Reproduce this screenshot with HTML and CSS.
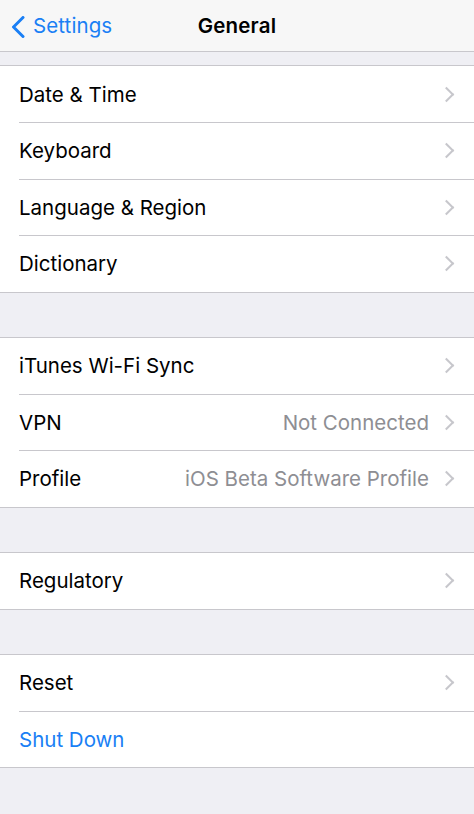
FILE: index.html
```html
<!DOCTYPE html>
<html>
<head>
    <title>General</title>
    <link rel="stylesheet" href="styles.css">
</head>
<body>

<header class="navbar">
    <a class="back">
        <svg class="back-icon" viewBox="0 0 14 22" width="14" height="22">
            <path d="M12 1.5 L2.5 11 L12 20.5" fill="none" stroke="#1a7ff5" stroke-width="3" stroke-linecap="round" stroke-linejoin="round"/>
        </svg>
        <span>Settings</span>
    </a>
    <h1 class="title">General</h1>
</header>

<div class="gap gap-top"></div>

<ul class="group">
    <li class="row"><span class="label">Date &amp; Time</span><i class="chevron"></i></li>
    <li class="row"><span class="label">Keyboard</span><i class="chevron"></i></li>
    <li class="row"><span class="label">Language &amp; Region</span><i class="chevron"></i></li>
    <li class="row"><span class="label">Dictionary</span><i class="chevron"></i></li>
</ul>

<div class="gap"></div>

<ul class="group">
    <li class="row"><span class="label">iTunes Wi-Fi Sync</span><i class="chevron"></i></li>
    <li class="row"><span class="label">VPN</span><span class="value">Not Connected</span><i class="chevron"></i></li>
    <li class="row"><span class="label">Profile</span><span class="value">iOS Beta Software Profile</span><i class="chevron"></i></li>
</ul>

<div class="gap"></div>

<ul class="group">
    <li class="row"><span class="label">Regulatory</span><i class="chevron"></i></li>
</ul>

<div class="gap"></div>

<ul class="group">
    <li class="row"><span class="label">Reset</span><i class="chevron"></i></li>
    <li class="row"><span class="label action">Shut Down</span></li>
</ul>

<div class="gap gap-bottom"></div>

</body>
</html>
```

FILE: styles.css
```css
html, body {
    margin: 0;
    padding: 0;
    background: #efeff4;
    font-family: Inter, "Liberation Sans", sans-serif;
    -webkit-font-smoothing: antialiased;
}

.navbar {
    height: 51px;
    background: #f7f7f7;
    border-bottom: 1px solid #c8c7cc;
    display: flex;
    align-items: center;
    justify-content: center;
    position: relative;
}

.back {
    position: absolute;
    left: 11px;
    top: 0;
    height: 51px;
    display: flex;
    align-items: center;
    gap: 8px;
    color: #1a7ff5;
    font-size: 20.5px;
    letter-spacing: 0.1px;
}

.back-icon {
    margin-top: 2px;
}

.back span {
    margin-top: -1px;
}

.title {
    margin: -1px 0 0;
    font-size: 20.5px;
    font-weight: 600;
    color: #000;
    letter-spacing: 0.2px;
}

.gap {
    height: 44px;
}

.gap-top {
    height: 13px;
}

.gap-bottom {
    height: 48px;
}

.group {
    list-style: none;
    margin: 0;
    padding: 0;
    background: #fff;
    border-top: 1px solid #c8c7cc;
    border-bottom: 1px solid #c8c7cc;
}

.row {
    height: 56px;
    margin-left: 19px;
    padding-right: 19px;
    display: flex;
    align-items: center;
    font-size: 20.5px;
    color: #000;
}

.row + .row {
    border-top: 1px solid #c8c7cc;
    height: 55.5px;
}

.label {
    flex: 1;
}

.value {
    color: #8e8e93;
    margin-right: 12px;
}

.action {
    color: #1a7ff5;
}

.chevron {
    width: 9px;
    height: 9px;
    border-top: 2px solid #c7c7cc;
    border-right: 2px solid #c7c7cc;
    transform: rotate(45deg);
    margin-right: 3px;
}
```
